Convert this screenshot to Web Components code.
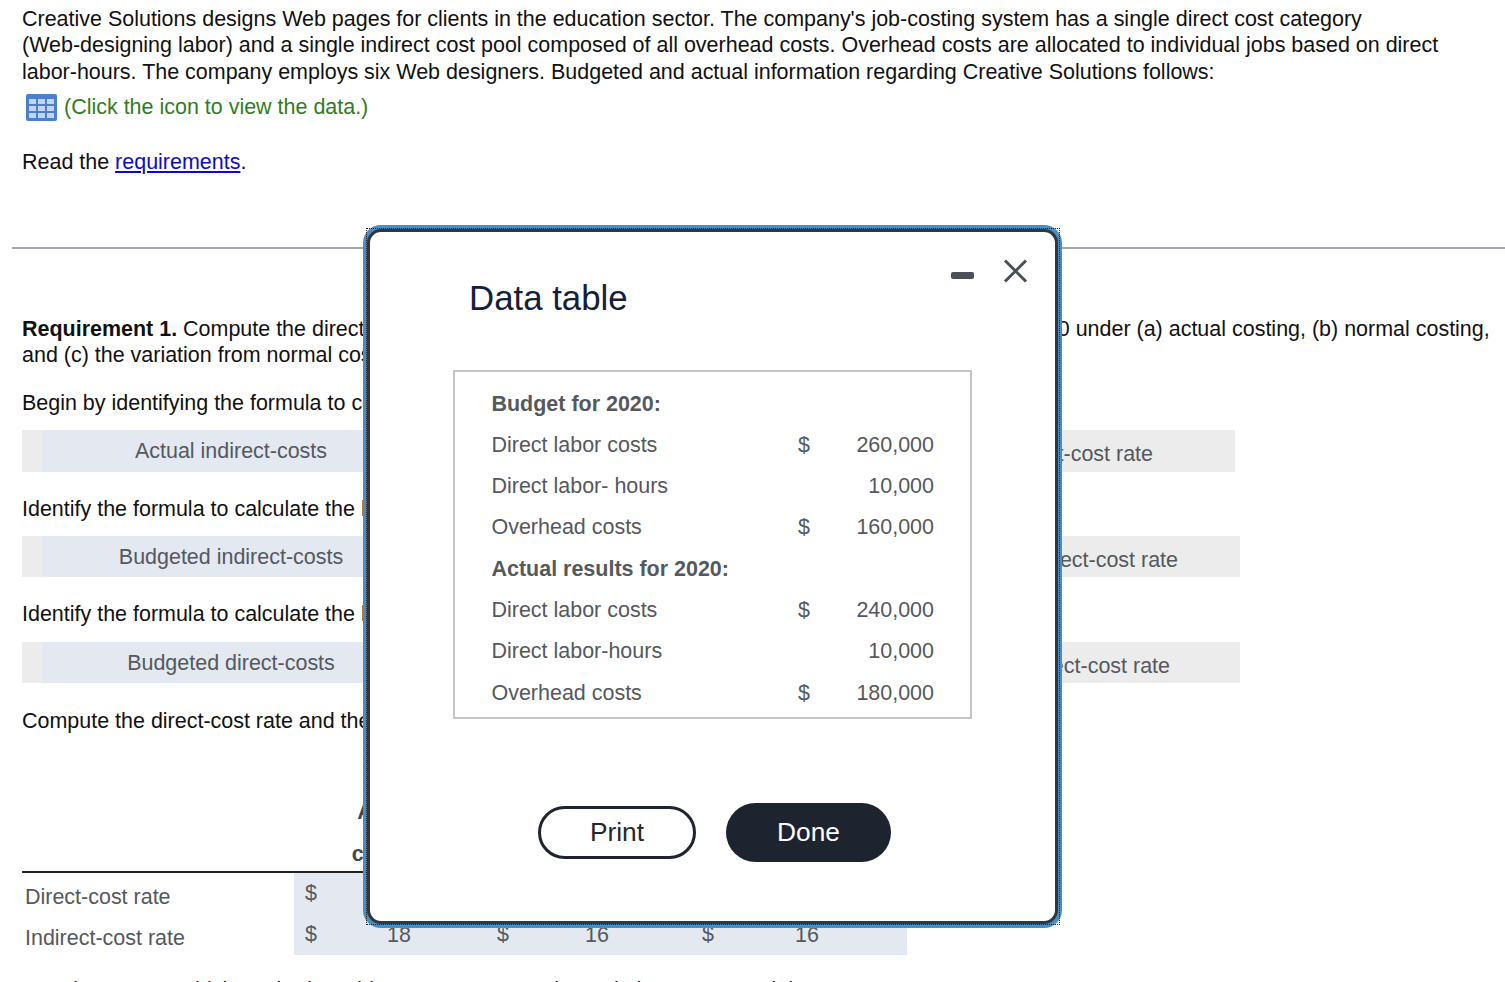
<!DOCTYPE html>
<html>
<head>
<meta charset="utf-8">
<title>Data table</title>
<style>
  html, body { margin: 0; height: 982px; overflow: hidden; background: #fff; }
  body { font: 21.47px/26.3px "Liberation Sans", Arial, sans-serif; color: #111; }
</style>
</head>
<body>

<question-page>
  <text-block top="0">Creative Solutions designs Web pages for clients in the education sector. The company's job-costing system has a single direct cost category<br>(Web-designing labor) and a single indirect cost pool composed of all overhead costs. Overhead costs are allocated to individual jobs based on direct<br>labor-hours. The company employs six Web designers. Budgeted and actual information regarding Creative Solutions follows:</text-block>
  <data-link>(Click the icon to view the data.)</data-link>
  <text-block top="29">Read the <a href="#" style="color:#0b0bd0">requirements</a>.</text-block>
  <page-rule></page-rule>
  <text-block top="67"><b>Requirement 1.</b> Compute the direct-cost rate, and the indirect-cost rate per direct labor-hour for the year 2020 under (a) actual costing, (b) normal costing,<br>and (c) the variation from normal costing.</text-block>
  <text-block top="21">Begin by identifying the formula to compute each rate.</text-block>
  <formula-row top="14" width="1213" end="82" total="Actual indirect-cost rate">Actual indirect-costs</formula-row>
  <text-block top="24">Identify the formula to calculate the budgeted indirect-cost rate.</text-block>
  <formula-row top="14" width="1218" end="62" total="Budgeted indirect-cost rate">Budgeted indirect-costs</formula-row>
  <text-block top="24">Identify the formula to calculate the budgeted direct-cost rate.</text-block>
  <formula-row top="14" width="1218" end="70" total="Budgeted direct-cost rate">Budgeted direct-costs</formula-row>
  <text-block top="25">Compute the direct-cost rate and the indirect-cost rate.</text-block>
  <rate-table></rate-table>
  <text-block top="22">Requirement 2. Which method would you suggest Creative Solutions use? Explain.</text-block>
</question-page>

<data-modal>
  <data-row kind="head">Budget for 2020:</data-row>
  <data-row cur="$" val="260,000">Direct labor costs</data-row>
  <data-row val="10,000">Direct labor- hours</data-row>
  <data-row cur="$" val="160,000">Overhead costs</data-row>
  <data-row kind="head">Actual results for 2020:</data-row>
  <data-row cur="$" val="240,000">Direct labor costs</data-row>
  <data-row val="10,000">Direct labor-hours</data-row>
  <data-row cur="$" val="180,000">Overhead costs</data-row>
</data-modal>

<script>
class QuestionPage extends HTMLElement {
  connectedCallback() {
    this.attachShadow({ mode: 'open' });
    this.shadowRoot.innerHTML = `
      <style>
        :host { display: block; padding: 6px 0 0 22px; }
      </style>
      <slot></slot>`;
  }
}

class TextBlock extends HTMLElement {
  connectedCallback() {
    this.attachShadow({ mode: 'open' });
    this.shadowRoot.innerHTML = `
      <style>
        :host { display: block; white-space: nowrap; }
      </style>
      <slot></slot>`;
    this.style.marginTop = (this.getAttribute('top') || 0) + 'px';
  }
}

class DataLink extends HTMLElement {
  connectedCallback() {
    this.attachShadow({ mode: 'open' });
    this.shadowRoot.innerHTML = `
      <style>
        :host { display: flex; align-items: center; gap: 7px; margin: 9px 0 0 4px; height: 26px; color: #2f7d22; }
        svg { width: 31px; height: 27px; flex: none; margin-top: 2px; }
      </style>
      <svg viewBox="0 0 31 27">
        <rect width="31" height="27" rx="2" fill="#4a7fd2"/>
        <g fill="#c3d5f2">
          <rect x="3" y="5" width="7" height="5"/><rect x="12" y="5" width="7" height="5"/><rect x="21" y="5" width="7" height="5"/>
          <rect x="3" y="12" width="7" height="5"/><rect x="12" y="12" width="7" height="5"/><rect x="21" y="12" width="7" height="5"/>
          <rect x="3" y="19" width="7" height="5"/><rect x="12" y="19" width="7" height="5"/><rect x="21" y="19" width="7" height="5"/>
        </g>
      </svg>
      <span><slot></slot></span>`;
  }
}

class PageRule extends HTMLElement {
  connectedCallback() {
    this.attachShadow({ mode: 'open' });
    this.shadowRoot.innerHTML = `
      <style>
        :host { display: block; height: 2px; margin: 72px 0 0 -10px; background: #a6a8b1; }
      </style>`;
  }
}

class FormulaRow extends HTMLElement {
  connectedCallback() {
    this.attachShadow({ mode: 'open' });
    this.shadowRoot.innerHTML = `
      <style>
        :host { display: flex; height: 41.5px; color: #55585d; background: #ececec; }
        .pad { width: 20px; flex: none; }
        .cell { width: 378px; flex: none; box-sizing: border-box; background: #e3e8f1; text-align: center; line-height: 41.5px; padding-top: 1px; }
        .total { flex: 1; text-align: right; line-height: 41.5px; padding-top: 4px; white-space: nowrap; box-sizing: border-box; }
      </style>
      <div class="pad"></div>
      <div class="cell"><slot></slot></div>
      <div class="total"></div>`;
    this.style.marginTop = this.getAttribute('top') + 'px';
    this.style.width = this.getAttribute('width') + 'px';
    const total = this.shadowRoot.querySelector('.total');
    total.textContent = this.getAttribute('total');
    total.style.paddingRight = this.getAttribute('end') + 'px';
  }
}

class RateTable extends HTMLElement {
  connectedCallback() {
    this.attachShadow({ mode: 'open' });
    const rows = [['Direct-cost rate', '24', '24', '26'], ['Indirect-cost rate', '18', '16', '16']];
    const widths = [93, 99, 104];
    const body = rows.map(r => `
      <div class="label">${r[0]}</div>
      ${r.slice(1).map((v, i) => `<div class="num"><span>$</span><span class="val" style="width:${widths[i]}px">${v}</span></div>`).join('')}`).join('');
    this.shadowRoot.innerHTML = `
      <style>
        :host { display: block; margin-top: 54px; width: 885px; color: #55585d; }
        .grid { display: grid; grid-template-columns: 272px 192px 205px 216px; grid-auto-rows: 41.3px; }
        .grid.body { grid-auto-rows: 41px; border-top: 2px solid #222; }
        .head { font-weight: 700; text-align: center; color: #44474c; padding-top: 4px; line-height: 41.6px; grid-row: span 2; }
        .label { padding: 8px 0 0 3px; line-height: 33px; }
        .num { background: #e3e8f1; display: flex; line-height: 40px; padding-left: 11px; }
        .val { text-align: right; padding-top: 1px; }
        .num span:first-child { width: 13px; }
      </style>
      <div class="grid">
        <div style="grid-row: span 2"></div>
        <div class="head">Actual<br>costing</div>
        <div class="head">Normal<br>costing</div>
        <div class="head">Variation<br>costing</div>
      </div>
      <div class="grid body">${body}</div>`;
  }
}

class DataRow extends HTMLElement {
  connectedCallback() {
    this.attachShadow({ mode: 'open' });
    this.shadowRoot.innerHTML = `
      <style>
        :host { display: grid; grid-template-columns: 1fr 16px 122px; height: 41.3px; line-height: 41.3px; color: #55585d; }
        :host([kind="head"]) { font-weight: 700; }
        .cur { text-align: center; }
        .val { text-align: right; }
      </style>
      <div><slot></slot></div>
      <div class="cur"></div>
      <div class="val"></div>`;
    this.shadowRoot.querySelector('.cur').textContent = this.getAttribute('cur') || '';
    this.shadowRoot.querySelector('.val').textContent = this.getAttribute('val') || '';
  }
}

class DataModal extends HTMLElement {
  connectedCallback() {
    this.attachShadow({ mode: 'open' });
    this.shadowRoot.innerHTML = `
      <style>
        :host {
          position: absolute; left: 367px; top: 229px; width: 691px; height: 695px; box-sizing: border-box;
          border: 3px solid #33363b; border-radius: 14px; background: #fff;
          box-shadow: 0 0 0 4px #4a8cc4;
          display: flex; flex-direction: column;
        }
        :host::after {
          content: ""; position: absolute; inset: -4px -5px -4px -4px; border: 1px dotted #20252c; pointer-events: none;
        }
        header { display: flex; justify-content: space-between; align-items: flex-start; height: 138px; box-sizing: border-box; padding: 46px 27px 0 99px; }
        h1 { margin: 0; font: 400 34.8px/40px "Liberation Sans", Arial, sans-serif; color: #14203a; }
        .tools { display: flex; align-items: center; gap: 29px; margin-top: -19px; }
        .min { width: 23px; height: 7px; border-radius: 2px; background: #4b4f57; margin-top: 8px; }
        .tools svg { width: 25px; height: 24px; }
        .table {
          margin-left: 83px; width: 519px; height: 349px; box-sizing: border-box;
          border: 2px solid #c2c5c9; padding: 11.5px 36px 0 36.5px;
        }
        .actions { display: flex; align-items: center; gap: 30px; margin: 84px 0 0 168px; }
        button { font: 400 26.3px "Liberation Sans", Arial, sans-serif; border-radius: 30px; box-sizing: border-box; padding: 0; }
        .print { width: 158px; height: 53px; background: #fff; color: #23272e; border: 3px solid #1f2430; }
        .done { width: 165px; height: 59px; background: #1e2330; color: #fff; border: none; }
      </style>
      <header>
        <h1>Data table</h1>
        <div class="tools">
          <div class="min"></div>
          <svg viewBox="0 0 25 24"><path d="M2 1.5 L23 22.5 M23 1.5 L2 22.5" stroke="#4b4f57" stroke-width="3" fill="none"/></svg>
        </div>
      </header>
      <div class="table"><slot></slot></div>
      <div class="actions">
        <button class="print">Print</button>
        <button class="done">Done</button>
      </div>`;
  }
}

customElements.define('question-page', QuestionPage);
customElements.define('text-block', TextBlock);
customElements.define('data-link', DataLink);
customElements.define('page-rule', PageRule);
customElements.define('formula-row', FormulaRow);
customElements.define('rate-table', RateTable);
customElements.define('data-row', DataRow);
customElements.define('data-modal', DataModal);
</script>
</body>
</html>
